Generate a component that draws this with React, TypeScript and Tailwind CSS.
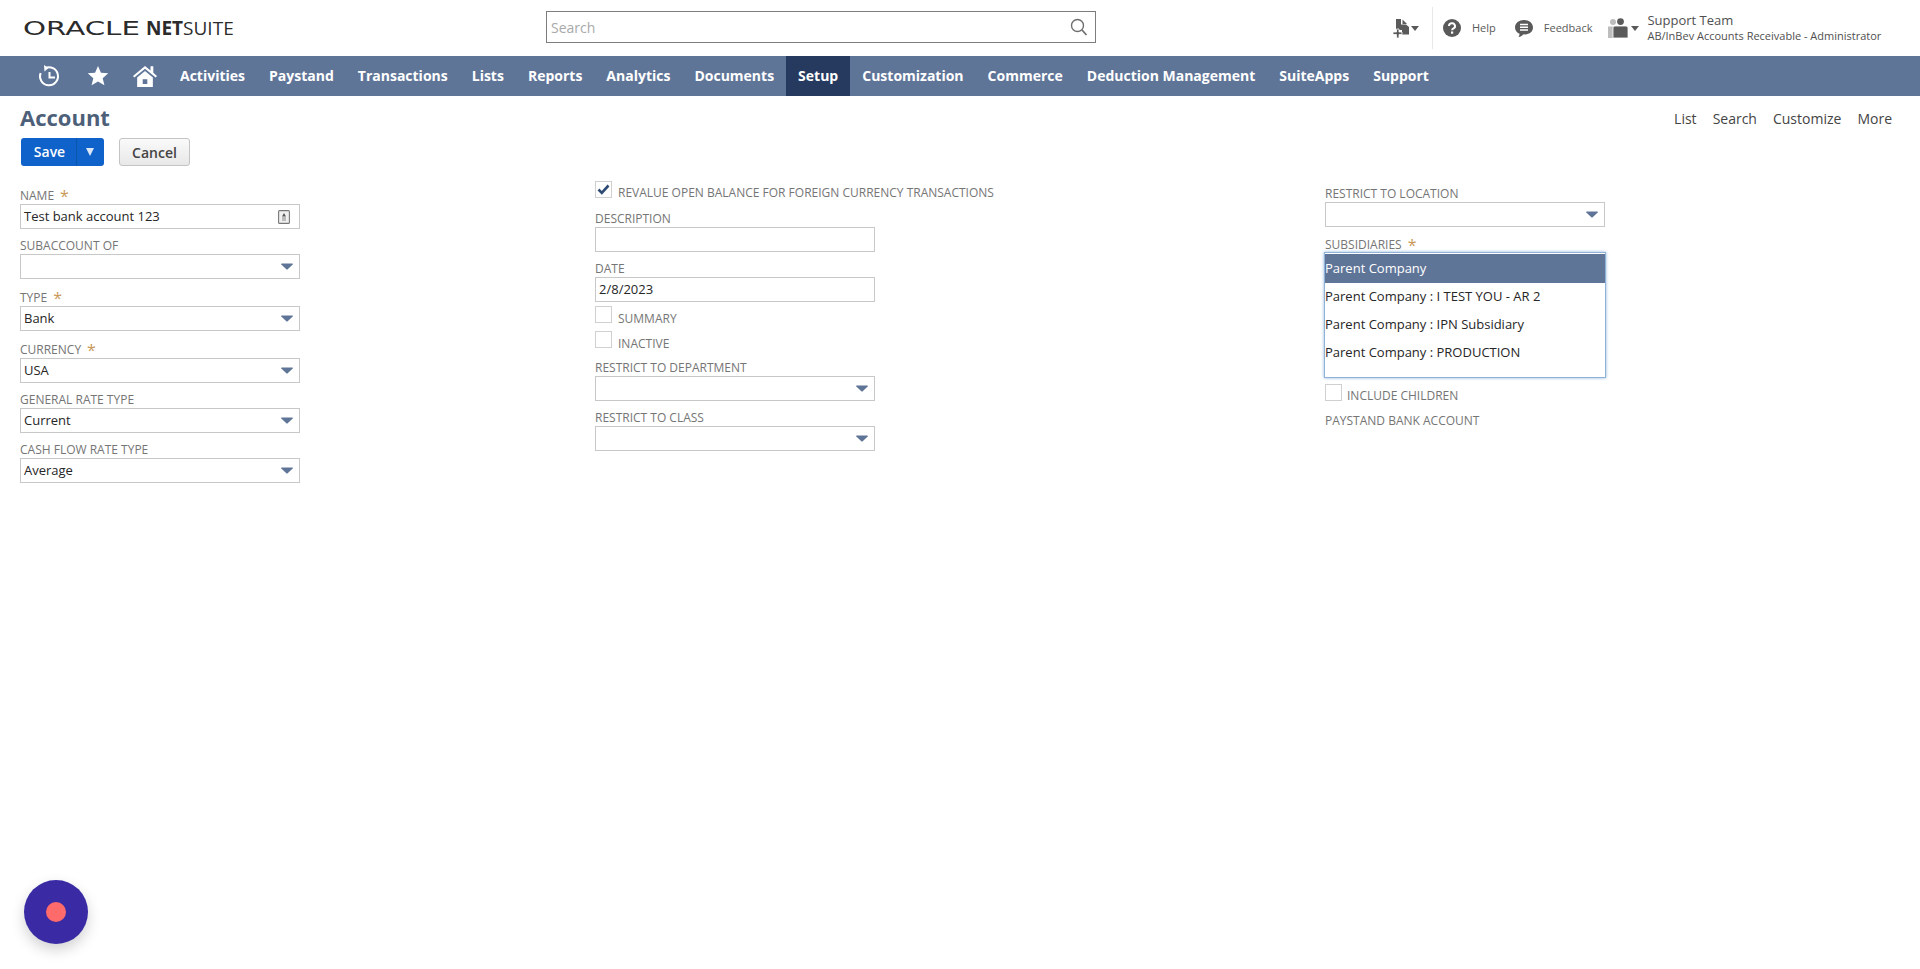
import type { ReactNode } from 'react';

const NAV_ITEMS = ['Activities', 'Paystand', 'Transactions', 'Lists', 'Reports', 'Analytics', 'Documents', 'Setup', 'Customization', 'Commerce', 'Deduction Management', 'SuiteApps', 'Support'];
const SUBSIDIARIES = ['Parent Company', 'Parent Company : I TEST YOU - AR 2', 'Parent Company : IPN Subsidiary', 'Parent Company : PRODUCTION'];

function Label({ children, required, className = '' }: { children: ReactNode; required?: boolean; className?: string }) {
  return (
    <div className={`flex items-center text-[12px] leading-[16px] uppercase text-[#757575] ${className}`}>
      {children}
      {required && <span className="ml-[6px] text-[#c9995a] text-[16px] leading-[12px]">*</span>}
    </div>
  );
}

function TextBox({ value, children }: { value?: string; children?: ReactNode }) {
  return (
    <div className="flex h-[25px] w-[280px] items-center justify-between border border-[#c8c8c8] bg-white pl-[3px] pr-[10px] text-[13px] text-[#262626]">
      <span>{value}</span>
      {children}
    </div>
  );
}

function SelectBox({ value }: { value?: string }) {
  return (
    <TextBox value={value}>
      <svg width="12" height="7" viewBox="0 0 14 8" className="-mr-[4px]">
        <path d="M0 1.5 Q0 0.5 1 0.5 H13 Q14 0.5 14 1.5 L7.5 7.5 H6.5 Z" fill="#5f7598" />
      </svg>
    </TextBox>
  );
}

function CheckBox({ checked }: { checked?: boolean }) {
  return (
    <div className="flex h-[17px] w-[17px] shrink-0 items-center justify-center border border-[#d0d0d0] bg-white">
      {checked && (
        <svg width="13" height="11" viewBox="0 0 13 11">
          <path d="M1.5 5.5 L4.8 8.8 L11.5 1.5" fill="none" stroke="#2d4a73" strokeWidth="2.6" />
        </svg>
      )}
    </div>
  );
}

function HistoryIcon() {
  return (
    <svg width="24" height="24" viewBox="0 0 24 24" fill="none" stroke="white" strokeWidth="2">
      <path d="M8 4.2 A9 9 0 1 1 3.6 9" />
      <path d="M7 1 L11.5 4 L7.5 7.5 Z" fill="white" stroke="none" />
      <path d="M12.5 8 V13.5 H18" />
    </svg>
  );
}

function HomeIcon() {
  return (
    <svg width="24" height="23" viewBox="0 0 26 24" fill="white">
      <path d="M13 0.5 L19 5.5 V1 H22 V8 L26 11.5 L24.6 13.2 L13 3.6 L1.4 13.2 L0 11.5 Z" />
      <path d="M4.5 13 L13 6 L21.5 13 V23.5 H4.5 Z M10.5 15 V20 H15.5 V15 Z" fillRule="evenodd" />
    </svg>
  );
}

function Header() {
  return (
    <header className="flex h-[56px] items-center bg-white pb-[2px]">
      <div className="ml-[23px] flex w-[523px] items-baseline pt-[3px] font-['DejaVu_Sans',sans-serif] text-[#2b2b2b]">
        <span className="w-[123px] origin-left scale-x-[1.54] text-[19px] leading-none">ORACLE</span>
        <span className="font-['Open_Sans',sans-serif] text-[19px] font-bold leading-none">NET</span>
        <span className="font-['Open_Sans',sans-serif] text-[19px] font-normal leading-none">SUITE</span>
      </div>
      <div className="flex h-[32px] w-[550px] items-center justify-between border border-[#7d7d7d] pl-[4px] pr-[6px] text-[14px] text-[#a9a9a9]">
        <span>Search</span>
        <svg width="20" height="20" viewBox="0 0 20 20" fill="none" stroke="#6f6f6f" strokeWidth="1.4">
          <circle cx="8.5" cy="8.5" r="6" />
          <path d="M13 13 L17.5 18" strokeWidth="1.8" />
        </svg>
      </div>
      <div className="ml-[297px] flex items-center pt-[2px]">
        <svg width="16" height="19" viewBox="0 0 16 19">
          <path d="M3 0 H8 V5.5 H13 L16 8 V15.5 H9 V11 H3 Z" fill="#5a5a5a" />
          <path d="M9.5 0.5 L14 5 H9.5 Z" fill="#5a5a5a" />
          <path d="M3.5 10 H6 V13 H9 V15.5 H6 V19 H3.5 V15.5 H0 V13 H3.5 Z" fill="#5a5a5a" stroke="white" strokeWidth="0.8" />
        </svg>
        <svg width="8" height="5" viewBox="0 0 8 5" className="ml-[2px]"><path d="M0 0 H8 L4 5 Z" fill="#5a5a5a" /></svg>
        <div className="ml-[13px] h-[42px] w-px bg-[#e8e8e8]" />
        <svg width="18" height="18" viewBox="0 0 18 18" className="ml-[10px]">
          <circle cx="9" cy="9" r="9" fill="#5a5a5a" />
          <path d="M6 7 A3 2.8 0 1 1 10.5 9.4 Q9.1 10 9.1 11.3" fill="none" stroke="white" strokeWidth="2" />
          <rect x="8" y="12.5" width="2.2" height="2.2" fill="white" />
        </svg>
        <span className="ml-[11px] text-[11px] text-[#5a5a5a]">Help</span>
        <svg width="18" height="18" viewBox="0 0 18 18" className="ml-[19px]">
          <path d="M9 1 C14 1 18 4 18 8.5 C18 13 14 15.5 9 15.5 L8 15.5 C7 16.8 5.5 17.8 3.5 18 C4.3 16.8 4.6 15.8 4.5 14.8 C1.8 13.6 0 11.3 0 8.5 C0 4 4 1 9 1 Z" fill="#5a5a5a" />
          <path d="M5 5.5 H13 M5 8.3 H13 M5 11 H13" stroke="white" strokeWidth="1.5" />
        </svg>
        <span className="ml-[11px] text-[11px] text-[#5a5a5a]">Feedback</span>
        <svg width="20" height="20" viewBox="0 0 20 20" className="ml-[16px]">
          <circle cx="5" cy="4" r="3" fill="#bdbdbd" />
          <path d="M0 8.5 H7 V20 H0 Z" fill="#bdbdbd" />
          <circle cx="12.5" cy="3.6" r="3.4" fill="#5a5a5a" />
          <path d="M5 10 Q5 8 7 8 H18 Q20 8 20 10 V20 H5 Z" fill="#5a5a5a" stroke="white" strokeWidth="0.8" />
        </svg>
        <svg width="8" height="5" viewBox="0 0 8 5" className="ml-[3px]"><path d="M0 0 H8 L4 5 Z" fill="#5a5a5a" /></svg>
        <div className="-mt-[2px] ml-[8px] text-[#4f4f4f]">
          <div className="text-[13px] leading-[18px]">Support Team</div>
          <div className="text-[11px] leading-[14px]">AB/InBev Accounts Receivable - Administrator</div>
        </div>
      </div>
    </header>
  );
}

function NavBar() {
  return (
    <nav className="flex h-[40px] items-center bg-[#5f7598] pl-[37px] text-white">
      <div className="flex w-[24px] justify-center"><HistoryIcon /></div>
      <svg width="22" height="22" viewBox="0 0 24 24" fill="white" className="ml-[26px]">
        <path d="M12 1 L15.2 8.4 L23.2 9.1 L17.1 14.4 L19 22.2 L12 18.1 L5 22.2 L6.9 14.4 L0.8 9.1 L8.8 8.4 Z" />
      </svg>
      <div className="ml-[24px] mr-[11px]"><HomeIcon /></div>
      {NAV_ITEMS.map((item) => (
        <div key={item} className={`flex h-full items-center px-[12px] pb-[2px] text-[14px] font-bold ${item === 'Setup' ? 'bg-[#253a5e]' : ''}`}>
          {item}
        </div>
      ))}
    </nav>
  );
}

export default function App() {
  return (
    <div className="relative h-[969px] w-[1920px] overflow-hidden bg-white font-['Open_Sans',sans-serif]">
      <Header />
      <NavBar />

      <div className="flex items-center justify-between pl-[20px] pr-[28px] pt-[4px]">
        <h1 className="text-[22px] font-bold leading-[34px] text-[#4d5f79]">Account</h1>
        <div className="mt-[3px] flex gap-[16px] text-[14px] text-[#444]">
          <span>List</span>
          <span>Search</span>
          <span>Customize</span>
          <span>More</span>
        </div>
      </div>

      <div className="mt-[4px] flex pl-[21px]">
        <div className="flex h-[28px] w-[83px] items-center rounded-[3px] bg-[#0f62c9] text-[14px] font-semibold text-white">
          <span className="w-[56px] border-r border-[#0c55ad] pl-[2px] text-center leading-[28px]">Save</span>
          <svg width="8" height="8" viewBox="0 0 8 8" className="ml-[9px]"><path d="M0 0 H8 L4 8 Z" fill="#dbe7f7" /></svg>
        </div>
        <div className="ml-[15px] flex h-[28px] w-[71px] items-center justify-center rounded-[3px] border border-[#c4c4c4] bg-gradient-to-b from-[#fafafa] to-[#e8e8e8] text-[14px] font-semibold text-[#444]">
          Cancel
        </div>
      </div>

      <div className="flex pl-[20px] pt-[15px]">
        <div className="w-[575px]">
          <Label required className="mt-[6px] h-[17px]">Name</Label>
          <TextBox value="Test bank account 123">
            <svg width="12" height="14" viewBox="0 0 12 14" className="-mr-[1px]">
              <rect x="0.6" y="0.6" width="10.8" height="12.8" rx="1" fill="#f0f0f0" stroke="#777" strokeWidth="1.1" />
              <path d="M6 3 L8 6.5 H4 Z" fill="#555" />
              <path d="M4 8 H8 M4 10 H8" stroke="#888" />
            </svg>
          </TextBox>
          <Label className="mt-[9px]">Subaccount of</Label>
          <SelectBox />
          <Label required className="mt-[10px] h-[17px]">Type</Label>
          <SelectBox value="Bank" />
          <Label required className="mt-[10px] h-[17px]">Currency</Label>
          <SelectBox value="USA" />
          <Label className="mt-[8px] h-[17px]">General Rate Type</Label>
          <SelectBox value="Current" />
          <Label className="mt-[8px] h-[17px]">Cash Flow Rate Type</Label>
          <SelectBox value="Average" />
        </div>

        <div className="w-[730px]">
          <div className="flex items-start">
            <CheckBox checked />
            <Label className="ml-[6px] mt-[4px]">Revalue open balance for foreign currency transactions</Label>
          </div>
          <Label className="mt-[9px] h-[17px]">Description</Label>
          <TextBox />
          <Label className="mt-[8px] h-[17px]">Date</Label>
          <TextBox value="2/8/2023" />
          <div className="mt-[4px] flex items-start">
            <CheckBox />
            <Label className="ml-[6px] mt-[5px]">Summary</Label>
          </div>
          <div className="mt-[4px] flex items-start">
            <CheckBox />
            <Label className="ml-[6px] mt-[5px]">Inactive</Label>
          </div>
          <Label className="mt-[7px] h-[17px]">Restrict to Department</Label>
          <SelectBox />
          <Label className="mt-[8px] h-[17px]">Restrict to Class</Label>
          <SelectBox />
        </div>

        <div>
          <Label className="mt-[4px] h-[17px]">Restrict to Location</Label>
          <SelectBox />
          <Label required className="mt-[9px] h-[17px]">Subsidiaries</Label>
          <div className="h-[124px] w-[280px] bg-white pt-[1px] text-[13px] text-[#262626] shadow-[0_0_0_1px_#8fb2d9,0_0_3px_1px_#8fb2d9]">
            {SUBSIDIARIES.map((name, i) => (
              <div key={name} className={`flex h-[28px] items-center ${i === 0 ? 'h-[29px] bg-[#5f7598] text-white' : ''}`}>{name}</div>
            ))}
          </div>
          <div className="mt-[7px] flex items-start">
            <CheckBox />
            <Label className="ml-[5px] mt-[4px]">Include Children</Label>
          </div>
          <Label className="mt-[9px]">Paystand Bank Account</Label>
        </div>
      </div>

      {/* floating widget, sits over the page */}
      <div className="absolute left-[24px] top-[880px] flex h-[64px] w-[64px] items-center justify-center rounded-full bg-[#3a2ba5] shadow-[0_6px_14px_rgba(0,0,0,0.18)]">
        <div className="h-[20px] w-[20px] rounded-full bg-[#ff6b6b]" />
      </div>
    </div>
  );
}
